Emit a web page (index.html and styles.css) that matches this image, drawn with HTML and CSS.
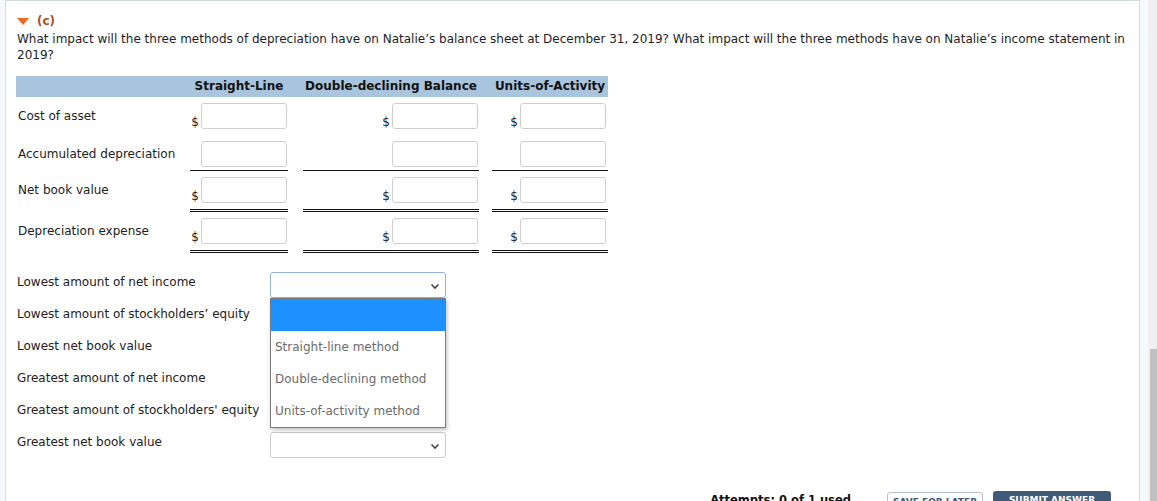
FILE: index.html
```html
<!DOCTYPE html>
<html>
<head>
<meta charset="utf-8">
<link rel="stylesheet" href="styles.css">
</head>
<body>
<div class="page">
  <div class="gutter-left"></div>
  <main class="panel">
    <div class="part-head"><span class="tri"></span><span class="part-label">(c)</span></div>
    <p class="question">What impact will the three methods of depreciation have on Natalie’s balance sheet at December 31, 2019? What impact will the three methods have on Natalie’s income statement in 2019?</p>

    <div class="dep-table">
      <div class="row head">
        <div class="c-label"></div>
        <div class="c-sl">Straight-Line</div>
        <div class="c-ddb">Double-declining Balance</div>
        <div class="c-ua">Units-of-Activity</div>
      </div>
      <div class="row r-cost">
        <div class="c-label">Cost of asset</div>
        <div class="c-sl cell"><span class="dollar">$</span><span class="inp"></span></div>
        <div class="c-ddb cell"><span class="dollar">$</span><span class="inp"></span></div>
        <div class="c-ua cell"><span class="dollar">$</span><span class="inp"></span></div>
      </div>
      <div class="row r-acc">
        <div class="c-label">Accumulated depreciation</div>
        <div class="c-sl cell"><span class="inp"></span></div>
        <div class="c-ddb cell"><span class="inp"></span></div>
        <div class="c-ua cell"><span class="inp"></span></div>
      </div>
      <div class="row r-total">
        <div class="c-label">Net book value</div>
        <div class="c-sl cell"><span class="dollar">$</span><span class="inp"></span></div>
        <div class="c-ddb cell"><span class="dollar">$</span><span class="inp"></span></div>
        <div class="c-ua cell"><span class="dollar">$</span><span class="inp"></span></div>
      </div>
      <div class="row r-total">
        <div class="c-label">Depreciation expense</div>
        <div class="c-sl cell"><span class="dollar">$</span><span class="inp"></span></div>
        <div class="c-ddb cell"><span class="dollar">$</span><span class="inp"></span></div>
        <div class="c-ua cell"><span class="dollar">$</span><span class="inp"></span></div>
      </div>
    </div>

    <div class="choices">
      <div class="choice">
        <div class="choice-label">Lowest amount of net income</div>
        <div class="select-wrap">
          <div class="select focused"><svg class="chev" width="10" height="7" viewBox="0 0 10 7"><path d="M1.5 1.5 L5 5 L8.5 1.5" fill="none" stroke="#444" stroke-width="1.6"/></svg></div>
          <div class="menu">
            <div class="opt hi"></div>
            <div class="opt">Straight-line method</div>
            <div class="opt">Double-declining method</div>
            <div class="opt">Units-of-activity method</div>
          </div>
        </div>
      </div>
      <div class="choice">
        <div class="choice-label">Lowest amount of stockholders’ equity</div>
        <div class="select-wrap"><div class="select"></div></div>
      </div>
      <div class="choice">
        <div class="choice-label">Lowest net book value</div>
        <div class="select-wrap"><div class="select"></div></div>
      </div>
      <div class="choice">
        <div class="choice-label">Greatest amount of net income</div>
        <div class="select-wrap"><div class="select"></div></div>
      </div>
      <div class="choice">
        <div class="choice-label">Greatest amount of stockholders' equity</div>
        <div class="select-wrap"><div class="select"></div></div>
      </div>
      <div class="choice">
        <div class="choice-label">Greatest net book value</div>
        <div class="select-wrap">
          <div class="select"><svg class="chev" width="10" height="7" viewBox="0 0 10 7"><path d="M1.5 1.5 L5 5 L8.5 1.5" fill="none" stroke="#444" stroke-width="1.6"/></svg></div>
        </div>
      </div>
    </div>

    <div class="footer">
      <span class="attempts">Attempts: 0 of 1 used</span>
      <span class="btn btn-save">SAVE FOR LATER</span>
      <span class="btn btn-submit">SUBMIT ANSWER</span>
    </div>
  </main>
  <div class="gutter-right"></div>
  <div class="scrollbar"><div class="thumb"></div></div>
</div>
</body>
</html>
```

FILE: styles.css
```css
html, body {
  margin: 0;
  padding: 0;
  height: 100%;
  overflow: hidden;
}
body {
  font-family: "DejaVu Sans", Verdana, sans-serif;
  font-size: 12px;
  color: #222;
  background: #f5f8fc;
}
.page {
  display: flex;
  height: 501px;
}
.gutter-left {
  width: 5px;
  flex: none;
  background: #f5f8fc;
}
.panel {
  width: 1117px;
  flex: none;
  background: #fff;
  border-left: 1px solid #d3dbe5;
  border-top: 1px solid #d3dbe5;
  border-right: 1px solid #d3dbe5;
  padding: 0 6px 0 10px;
  overflow: hidden;
}
.gutter-right {
  width: 8px;
  flex: none;
  background: #f5f8fc;
}
.scrollbar {
  width: 9px;
  flex: none;
  background: #f0f0f0;
  padding-top: 349px;
  padding-left: 2px;
  box-sizing: border-box;
}
.thumb {
  height: 200px;
  background: #c1c1c1;
}

.part-head {
  display: flex;
  align-items: center;
  height: 16px;
  margin-top: 12px;
  padding-left: 1px;
}
.tri {
  width: 0;
  height: 0;
  border-left: 6px solid transparent;
  border-right: 6px solid transparent;
  border-top: 7px solid #ee6a1f;
  margin-right: 8px;
}
.part-label {
  font-weight: bold;
  font-size: 12px;
  color: #b04e1c;
}
.question {
  margin: 2px 0 0 1px;
  line-height: 16px;
  color: #1e1e2a;
  font-size: 12px;
}

.dep-table {
  margin-top: 13px;
  width: 592px;
}
.row {
  display: flex;
}
.row.head {
  background: #a9c4dd;
  height: 21px;
  line-height: 21px;
  font-weight: bold;
  color: #111;
}
.row.head > div {
  text-align: center;
}
.c-label {
  width: 174px;
  flex: none;
  padding-left: 2px;
  box-sizing: border-box;
  line-height: 26px;
  color: #222;
}
.c-sl { width: 98px; flex: none; }
.c-ddb { width: 176px; flex: none; margin-left: 15px; }
.c-ua { width: 116px; flex: none; margin-left: 13px; }

.cell {
  display: flex;
  justify-content: flex-end;
  align-items: flex-end;
  padding-right: 1px;
  box-sizing: border-box;
}
.c-ua.cell { padding-right: 2px; }
.dollar {
  line-height: 14px;
  margin-right: 2px;
}
.inp {
  display: block;
  width: 84px;
  height: 24px;
  border: 1px solid #cfcfcf;
  border-radius: 3px;
  background: #fff;
}

.r-cost > div { padding-top: 6px; padding-bottom: 12px; }
.r-acc > div { padding-top: 0; padding-bottom: 3px; }
.r-acc > .cell { border-bottom: 1px solid #111; }
.r-total > div { padding-top: 6px; padding-bottom: 6px; }
.r-total > .cell { border-bottom: 3px double #111; }

.choices {
  margin-top: 19px;
  display: flex;
  flex-direction: column;
  gap: 6px;
}
.choice {
  display: flex;
  height: 26px;
}
.choice-label {
  width: 254px;
  flex: none;
  line-height: 20px;
  padding-left: 1px;
  box-sizing: border-box;
  color: #222;
}
.select-wrap {
  position: relative;
  width: 176px;
}
.select {
  height: 24px;
  border: 1px solid #cccccc;
  border-radius: 3px;
  background: #fff;
  display: flex;
  align-items: center;
  justify-content: flex-end;
  padding-right: 5px;
}
.select.focused {
  border-color: #8fb3da;
}
.chev {
  margin-top: 2px;
}
.menu {
  position: absolute;
  top: 26px;
  left: 0;
  width: 174px;
  background: #fff;
  border: 1px solid #7a7a7a;
  box-shadow: 1px 2px 4px rgba(0, 0, 0, 0.25);
  z-index: 5;
}
.opt {
  height: 32px;
  line-height: 32px;
  padding-left: 4px;
  color: #6b6b6b;
  white-space: nowrap;
}
.opt.hi {
  background: #1e90ff;
}

.footer {
  display: flex;
  justify-content: flex-end;
  align-items: flex-start;
  margin-top: 33px;
  padding-right: 22px;
}
.attempts {
  font-weight: bold;
  font-size: 11.5px;
  margin-right: 36px;
  margin-top: 2px;
  color: #111;
  white-space: nowrap;
}
.btn {
  display: inline-block;
  height: 22px;
  line-height: 19px;
  font-size: 9px;
  border-radius: 3px;
  font-weight: bold;
  white-space: nowrap;
}
.btn-save {
  width: 94px;
  text-align: center;
  border: 1px solid #b6c2d0;
  color: #3b5b7d;
  background: #fff;
  margin-right: 10px;
  margin-top: 1px;
}
.btn-submit {
  width: 118px;
  text-align: center;
  background: #3f5b79;
  color: #fff;
}
```
